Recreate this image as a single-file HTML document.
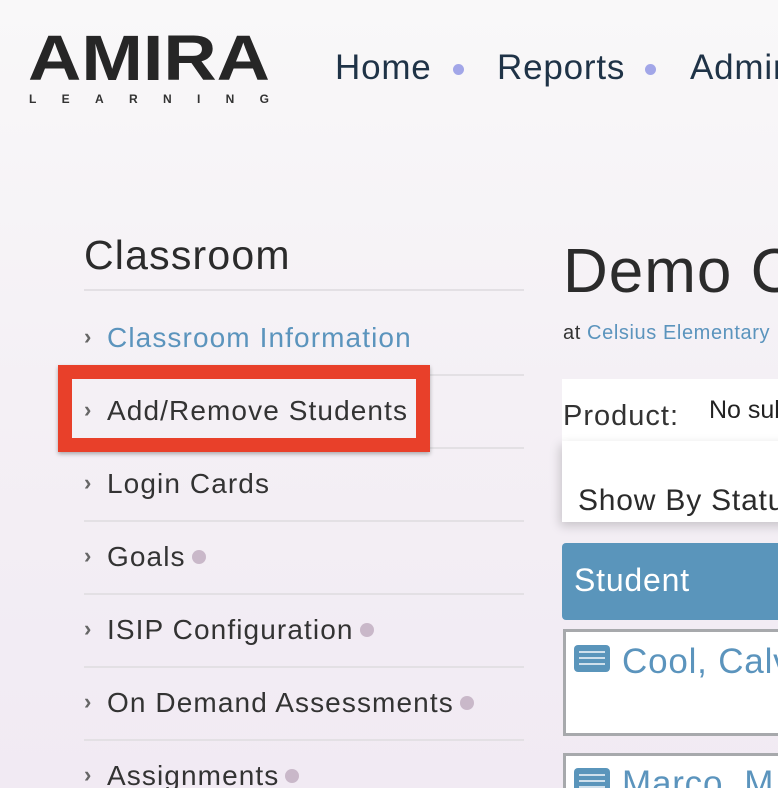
<!DOCTYPE html>
<html><head><meta charset="utf-8"><style>
html,body{margin:0;padding:0;width:778px;height:788px;overflow:hidden;}
#w{width:778px;height:788px;overflow:hidden;position:relative;font-family:"Liberation Sans","DejaVu Sans",sans-serif;background:linear-gradient(180deg,#f9f8f9 0%,#f4f0f5 50%,#f1eaf3 100%);}
.abs{position:absolute;white-space:nowrap;}
.nav{font-size:35px;color:#1f3347;top:48px;letter-spacing:0.8px;}
.dot{position:absolute;width:11px;height:11px;border-radius:50%;background:#a2a6e8;}
.item{position:absolute;left:84px;width:440px;height:73px;font-size:28px;color:#333;letter-spacing:1.1px;}
.item .t{position:absolute;left:23px;top:20px;}
.item .c{position:absolute;left:0;top:22px;font-size:22px;color:#666;font-weight:bold;}
.item .d{display:inline-block;width:14px;height:14px;border-radius:50%;background:#c9b8c9;margin-left:6px;vertical-align:2px;}
.sep{position:absolute;left:84px;width:440px;height:2px;background:#e3e0e4;}
</style></head><body><div id="w">
<svg class="abs" style="left:26px;top:26px" width="250" height="84" viewBox="0 0 250 84">
<text x="2" y="54" font-family="Liberation Sans" font-weight="bold" font-size="64" textLength="242" lengthAdjust="spacingAndGlyphs" fill="#262626">AMIRA</text>
<text x="3" y="77" font-family="Liberation Sans" font-weight="bold" font-size="12" textLength="240" lengthAdjust="spacing" fill="#333">LEARNING</text>
</svg>
<div class="abs nav" style="left:335px">Home</div>
<div class="dot" style="left:453px;top:64px"></div>
<div class="abs nav" style="left:497px">Reports</div>
<div class="dot" style="left:645px;top:64px"></div>
<div class="abs nav" style="left:690px">Admin</div>

<div class="abs" style="left:84px;top:232px;font-size:41px;color:#2b2b2b;letter-spacing:1.2px">Classroom</div>
<div class="sep" style="top:289px"></div>
<div class="item" style="top:302px"><span class="c">&#x203A;</span><span class="t" style="color:#5b94bd">Classroom Information</span></div>
<div class="sep" style="top:374px"></div>
<div class="item" style="top:375px"><span class="c">&#x203A;</span><span class="t">Add/Remove Students</span></div>
<div class="sep" style="top:447px"></div>
<div class="item" style="top:448px"><span class="c">&#x203A;</span><span class="t">Login Cards</span></div>
<div class="sep" style="top:520px"></div>
<div class="item" style="top:521px"><span class="c">&#x203A;</span><span class="t">Goals<span class="d"></span></span></div>
<div class="sep" style="top:593px"></div>
<div class="item" style="top:594px"><span class="c">&#x203A;</span><span class="t">ISIP Configuration<span class="d"></span></span></div>
<div class="sep" style="top:666px"></div>
<div class="item" style="top:667px"><span class="c">&#x203A;</span><span class="t">On Demand Assessments<span class="d"></span></span></div>
<div class="sep" style="top:739px"></div>
<div class="item" style="top:740px"><span class="c">&#x203A;</span><span class="t">Assignments<span class="d"></span></span></div>

<div class="abs" style="left:58px;top:365px;width:344px;height:59px;border:14px solid #e8402a;box-shadow:0 2px 4px rgba(0,0,0,.3)"></div>

<div class="abs" style="left:563px;top:236px;font-size:62px;color:#2b2b2b;letter-spacing:1px">Demo Class</div>
<div class="abs" style="left:563px;top:322px;font-size:20px;color:#333;letter-spacing:0.6px">at <span style="color:#5b94bd">Celsius Elementary</span></div>
<div class="abs" style="left:562px;top:379px;width:230px;height:62px;background:#fff"></div>
<div class="abs" style="left:563px;top:400px;font-size:29px;color:#333;letter-spacing:1px">Product:</div>
<div class="abs" style="left:709px;top:396px;font-size:25px;color:#222">No subject</div>
<div class="abs" style="left:562px;top:441px;width:230px;height:81px;background:#fff;box-shadow:-2px 4px 10px rgba(0,0,0,.18)"></div>
<div class="abs" style="left:578px;top:484px;font-size:30px;color:#2b2b2b;letter-spacing:0.8px">Show By Status</div>
<div class="abs" style="left:562px;top:543px;width:240px;height:77px;background:#5a95bb;border-radius:4px"></div>
<div class="abs" style="left:574px;top:562px;font-size:32px;color:#fff;letter-spacing:0.8px">Student</div>
<div class="abs" style="left:563px;top:629px;width:240px;height:101px;background:#fff;border:3px solid #a7a9ac"></div>
<div class="abs" style="left:574px;top:645px;width:36px;height:27px;background:#5a95bb;border-radius:4px">
<div style="position:absolute;left:5px;top:6px;width:26px;height:2px;background:#cfe0ec;box-shadow:0 6px 0 #cfe0ec,0 12px 0 #cfe0ec"></div></div>
<div class="abs" style="left:622px;top:642px;font-size:35px;color:#5b94bd;letter-spacing:0.8px">Cool, Calvin</div>
<div class="abs" style="left:563px;top:753px;width:240px;height:60px;background:#fff;border:3px solid #a7a9ac"></div>
<div class="abs" style="left:574px;top:768px;width:36px;height:27px;background:#5a95bb;border-radius:4px">
<div style="position:absolute;left:5px;top:6px;width:26px;height:2px;background:#cfe0ec;box-shadow:0 6px 0 #cfe0ec,0 12px 0 #cfe0ec"></div></div>
<div class="abs" style="left:622px;top:764px;font-size:35px;color:#5b94bd;letter-spacing:0.8px">Marco, M</div>
</div></body></html>
